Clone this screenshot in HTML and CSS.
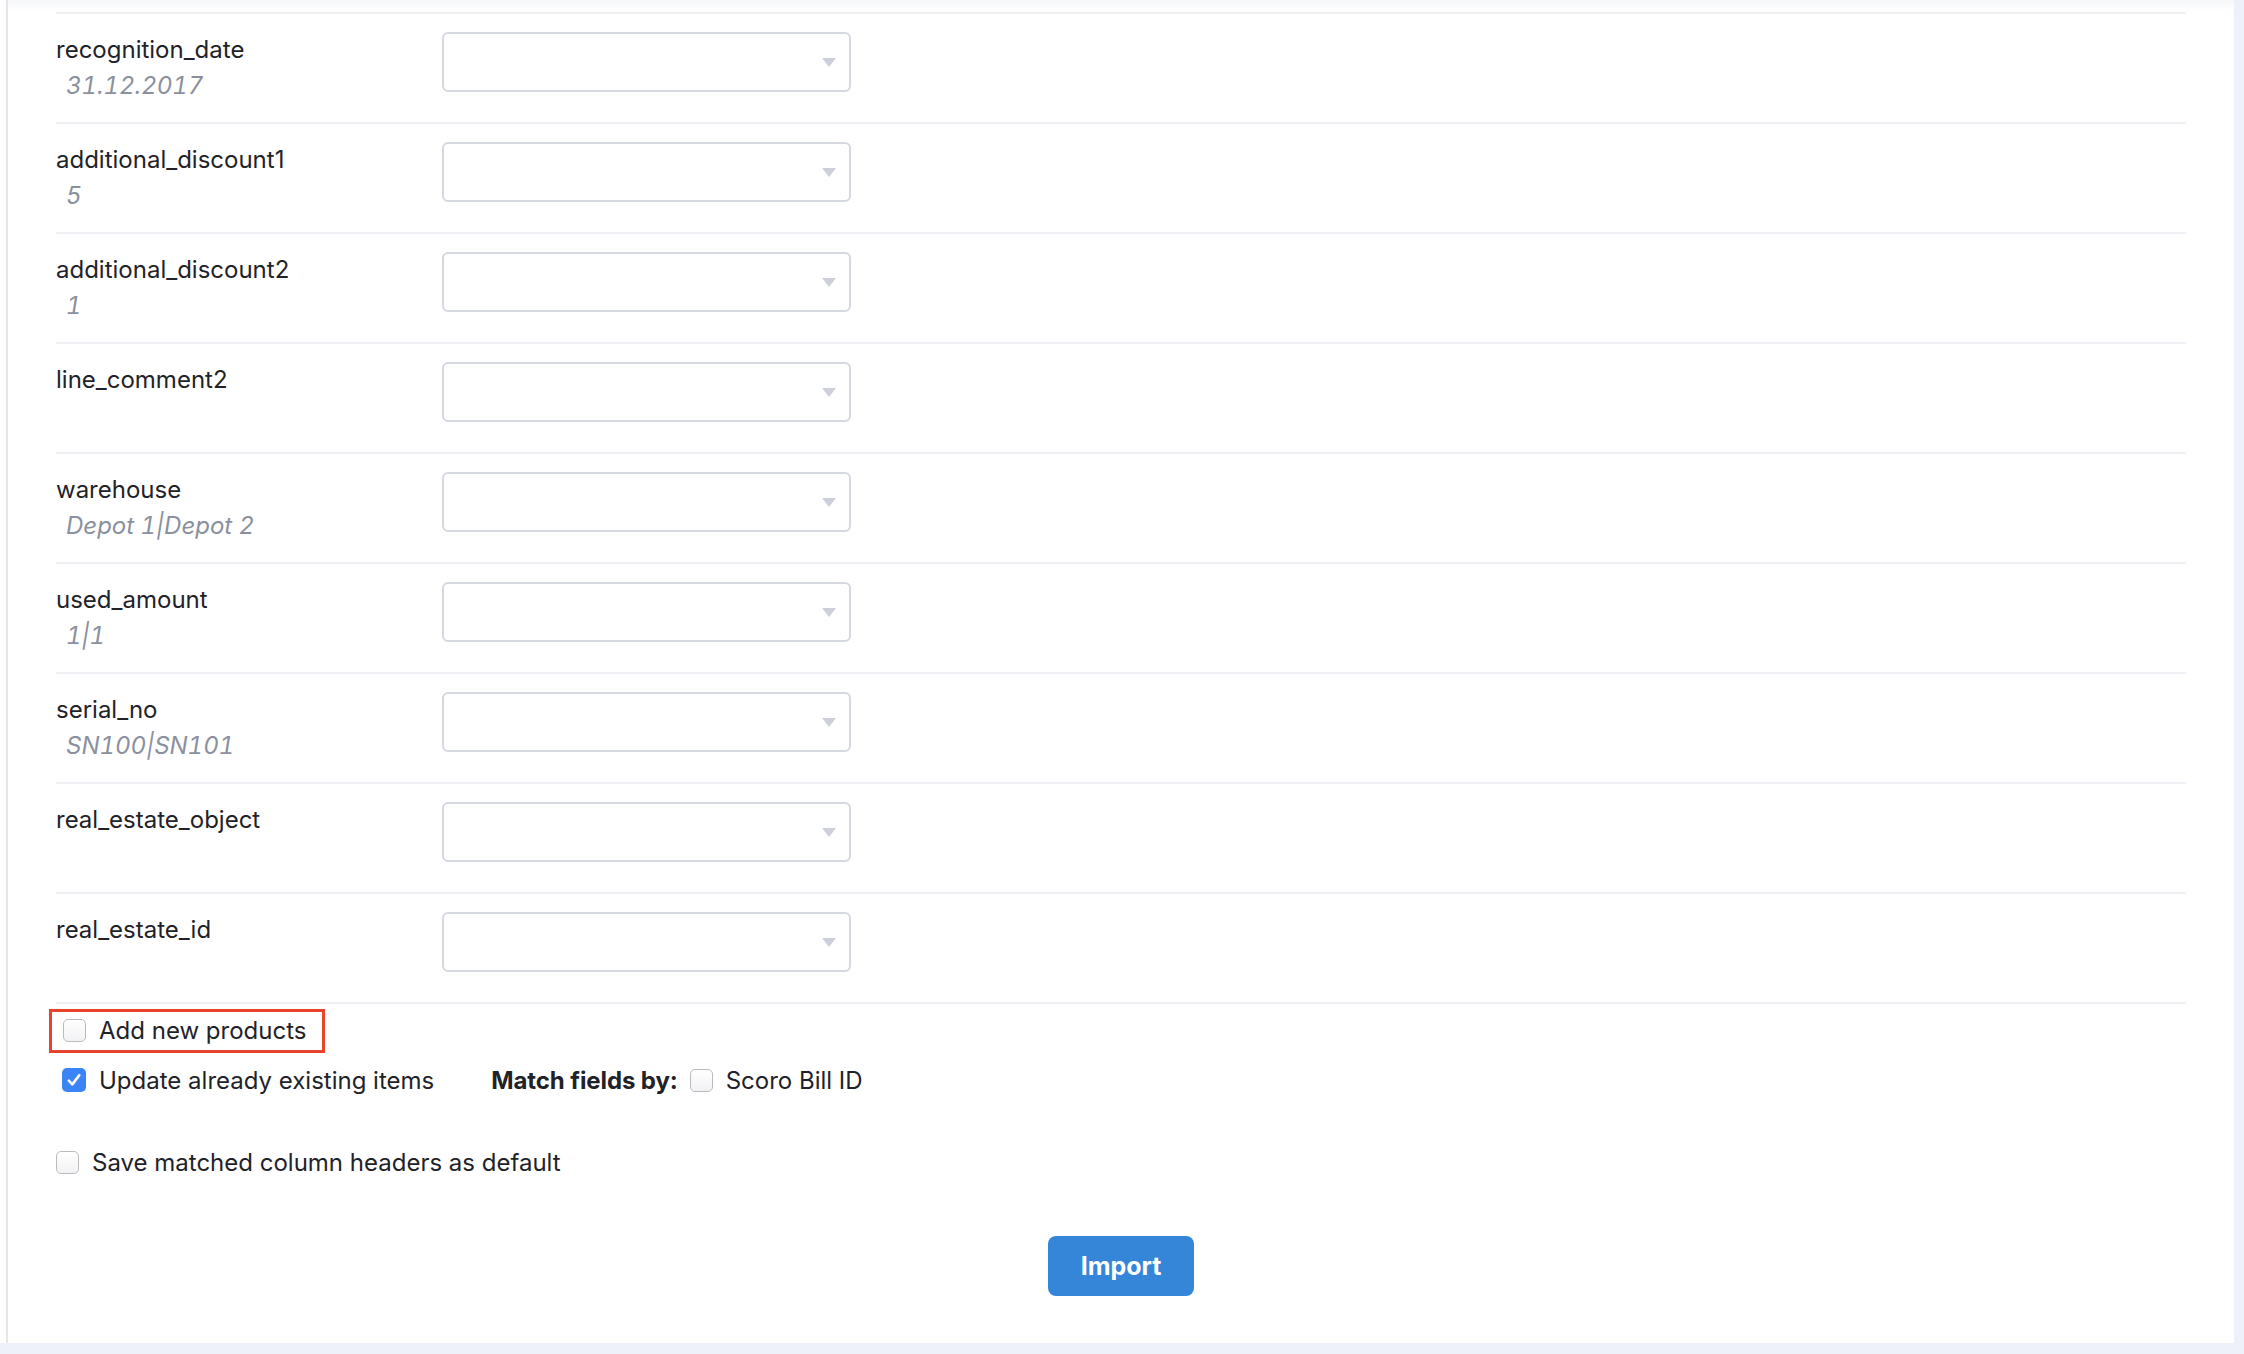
FILE: index.html
```html
<!DOCTYPE html>
<html lang="en">
<head>
<meta charset="utf-8">
<title>Import mapping</title>
<link rel="stylesheet" href="styles.css">
</head>
<body>
<div class="frame">
  <div class="panel">
    <div class="fields">
      <div class="row">
        <div class="label"><div class="name">recognition_date</div><div class="sample">31.12.2017</div></div>
        <div class="select"><span class="caret"></span></div>
      </div>
      <div class="row">
        <div class="label"><div class="name">additional_discount1</div><div class="sample">5</div></div>
        <div class="select"><span class="caret"></span></div>
      </div>
      <div class="row">
        <div class="label"><div class="name">additional_discount2</div><div class="sample">1</div></div>
        <div class="select"><span class="caret"></span></div>
      </div>
      <div class="row">
        <div class="label"><div class="name">line_comment2</div></div>
        <div class="select"><span class="caret"></span></div>
      </div>
      <div class="row">
        <div class="label"><div class="name">warehouse</div><div class="sample">Depot 1|Depot 2</div></div>
        <div class="select"><span class="caret"></span></div>
      </div>
      <div class="row">
        <div class="label"><div class="name">used_amount</div><div class="sample">1|1</div></div>
        <div class="select"><span class="caret"></span></div>
      </div>
      <div class="row">
        <div class="label"><div class="name">serial_no</div><div class="sample">SN100|SN101</div></div>
        <div class="select"><span class="caret"></span></div>
      </div>
      <div class="row">
        <div class="label"><div class="name">real_estate_object</div></div>
        <div class="select"><span class="caret"></span></div>
      </div>
      <div class="row">
        <div class="label"><div class="name">real_estate_id</div></div>
        <div class="select"><span class="caret"></span></div>
      </div>
    </div>

    <div class="options">
      <div class="opt-group">
        <label class="opt highlighted"><span class="box"></span><span>Add new products</span></label>
        <div class="opt-line">
          <label class="opt"><span class="box checked"><svg viewBox="0 0 24 24" width="24" height="24"><path d="M6.8 12.6 L10.3 16.4 L17.3 7.2" fill="none" stroke="#fff" stroke-width="2.6" stroke-linecap="round" stroke-linejoin="round"/></svg></span><span>Update already existing items</span></label>
          <span class="match-title">Match fields by:</span>
          <label class="opt"><span class="box"></span><span>Scoro Bill ID</span></label>
        </div>
      </div>
      <label class="opt save"><span class="box"></span><span>Save matched column headers as default</span></label>
    </div>

    <div class="actions">
      <button class="import-btn">Import</button>
    </div>
  </div>
</div>
</body>
</html>
```
FILE: styles.css
```css
html, body {
  margin: 0;
  padding: 0;
}
body {
  background: #eef1f9;
  font-family: Inter, "Noto Sans", "Liberation Sans", sans-serif;
  color: #1f2329;
}
.frame {
  background: #ffffff;
  margin-right: 10px;
  padding-left: 6px;
  height: 1343px;
  box-sizing: border-box;
}
.panel {
  border-left: 2px solid #e4e6ea;
  height: 100%;
  padding: 12px 48px 0 48px;
  box-sizing: border-box;
  background: linear-gradient(#f6f7f9 0px, #ffffff 11px) no-repeat;
  background-size: 100% 12px;
  background-color: #ffffff;
}
.fields {
  border-top: 2px solid #eef0f6;
}
.row {
  display: grid;
  grid-template-columns: 386px 409px;
  align-items: start;
  padding-top: 18px;
  box-sizing: border-box;
  border-bottom: 2px solid #eef0f6;
  height: 110px;
}
.name {
  font-size: 24px;
  line-height: 30px;
  margin-top: 3px;
}
.sample {
  font-size: 24px;
  line-height: 30px;
  margin-top: 6px;
  padding-left: 10px;
  font-style: italic;
  color: #8b909e;
  font-variant-numeric: tabular-nums;
}
.select {
  height: 60px;
  border: 2px solid #d5d8e1;
  border-radius: 6px;
  box-sizing: border-box;
  display: flex;
  align-items: center;
  justify-content: flex-end;
  padding-right: 13px;
  background: #fff;
}
.caret {
  width: 0;
  height: 0;
  border-left: 7px solid transparent;
  border-right: 7px solid transparent;
  border-top: 9px solid #cdd0db;
}
.options {
  padding-top: 11px;
}
.opt-group {
  margin-left: 6px;
  display: flex;
  flex-direction: column;
  gap: 20px;
}
.opt {
  display: inline-flex;
  align-items: center;
  height: 30px;
  font-size: 24px;
  gap: 13px;
  align-self: flex-start;
}
.highlighted {
  position: relative;
  margin-left: 1px;
}
.highlighted::after {
  content: "";
  position: absolute;
  left: -14px;
  right: -19px;
  top: -6px;
  bottom: -8px;
  border: 3px solid #e8432d;
}
.box {
  width: 23px;
  height: 23px;
  border: 1.5px solid #b9bbc0;
  border-radius: 5px;
  box-sizing: border-box;
  background: linear-gradient(#ffffff, #f2f2f4);
  display: inline-flex;
  align-items: center;
  justify-content: center;
  flex: none;
}
.box.checked {
  border: none;
  background: #3b84f6;
  width: 24px;
  height: 24px;
}
.box svg {
  display: block;
}
.opt-line {
  display: flex;
  align-items: center;
}
.match-title {
  font-weight: 700;
  font-size: 24px;
  margin-left: 57px;
  margin-right: 12px;
  letter-spacing: -0.1px;
}
.save {
  margin-top: 52px;
}
.actions {
  display: flex;
  justify-content: center;
  margin-top: 58px;
}
.import-btn {
  width: 146px;
  height: 60px;
  border: none;
  border-radius: 8px;
  background: #3585d8;
  color: #fff;
  font-family: Inter, "Noto Sans", sans-serif;
  font-weight: 700;
  font-size: 25px;
}
```
